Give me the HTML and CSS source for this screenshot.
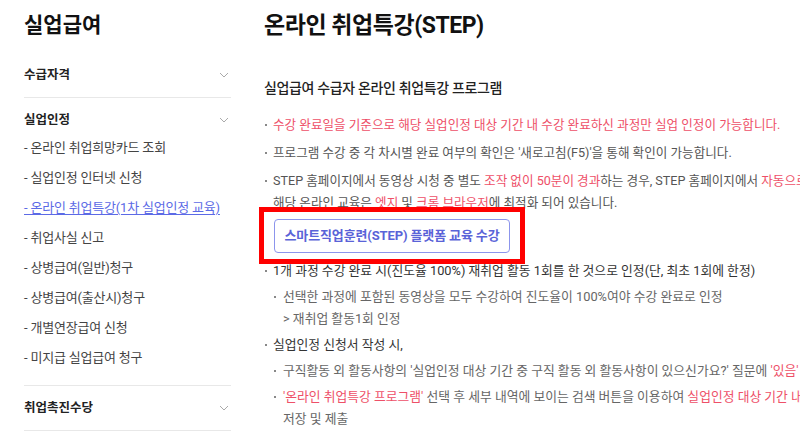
FILE: index.html
```html
<!DOCTYPE html>
<html lang="ko">
<head>
<meta charset="utf-8">
<title>온라인 취업특강(STEP)</title>
<link rel="stylesheet" href="styles.css">
</head>
<body>
<div class="page">
  <aside class="side">
    <h2 class="side-title">실업급여</h2>
    <div class="sec">
      <div class="sec-head"><span>수급자격</span><svg class="chev" width="10" height="6" viewBox="0 0 10 6"><polyline points="1,1 5,5 9,1" fill="none" stroke="#aaa" stroke-width="1"/></svg></div>
    </div>
    <div class="sec">
      <div class="sec-head"><span>실업인정</span><svg class="chev" width="10" height="6" viewBox="0 0 10 6"><polyline points="1,1 5,5 9,1" fill="none" stroke="#aaa" stroke-width="1"/></svg></div>
      <ul class="sub">
        <li>- 온라인 취업희망카드 조회</li>
        <li>- 실업인정 인터넷 신청</li>
        <li class="on"><span>- 온라인 취업특강(1차 실업인정 교육)</span></li>
        <li>- 취업사실 신고</li>
        <li>- 상병급여(일반)청구</li>
        <li>- 상병급여(출산시)청구</li>
        <li>- 개별연장급여 신청</li>
        <li>- 미지급 실업급여 청구</li>
      </ul>
    </div>
    <div class="sec">
      <div class="sec-head"><span>취업촉진수당</span><svg class="chev" width="10" height="6" viewBox="0 0 10 6"><polyline points="1,1 5,5 9,1" fill="none" stroke="#aaa" stroke-width="1"/></svg></div>
    </div>
  </aside>
  <main class="main">
    <h1 class="title">온라인 취업특강(STEP)</h1>
    <h3 class="heading">실업급여 수급자 온라인 취업특강 프로그램</h3>
    <ul class="list list-top">
      <li class="red">수강 완료일을 기준으로 해당 실업인정 대상 기간 내 수강 완료하신 과정만 실업 인정이 가능합니다.</li>
      <li>프로그램 수강 중 각 차시별 완료 여부의 확인은 '새로고침(F5)'을 통해 확인이 가능합니다.</li>
      <li>STEP 홈페이지에서 동영상 시청 중 별도 <span class="red">조작 없이 50분이 경과</span>하는 경우, STEP 홈페이지에서 <span class="red">자동으로</span><br>해당 온라인 교육은 <span class="red ul">엣지</span> 및 <span class="red ul">크롬 브라우저</span>에 최적화 되어 있습니다.</li>
    </ul>
    <div class="btn-wrap">
      <a class="btn" href="#">스마트직업훈련(STEP) 플랫폼 교육 수강</a>
    </div>
    <ul class="list list-bottom">
      <li>1개 과정 수강 완료 시(진도율 100%) 재취업 활동 1회를 한 것으로 인정(단, 최초 1회에 한정)
        <ul class="list sublist">
          <li>선택한 과정에 포함된 동영상을 모두 수강하여 진도율이 100%여야 수강 완료로 인정<br>&gt; 재취업 활동1회 인정</li>
        </ul>
      </li>
      <li>실업인정 신청서 작성 시,
        <ul class="list sublist">
          <li>구직활동 외 활동사항의 '실업인정 대상 기간 중 구직 활동 외 활동사항이 있으신가요?' 질문에 <span class="red">'있음'</span> 선택</li>
          <li><span class="red">'온라인 취업특강 프로그램'</span> 선택 후 세부 내역에 보이는 검색 버튼을 이용하여 <span class="red">실업인정 대상 기간 내</span><br>저장 및 제출</li>
        </ul>
      </li>
    </ul>
  </main>
</div>
</body>
</html>
```
FILE: styles.css
```css
html, body {
  margin: 0;
  padding: 0;
  overflow: hidden;
  background: #fff;
}
body {
  font-family: Roboto, "Noto Sans CJK KR", sans-serif;
  color: #444;
}
ul { list-style: none; margin: 0; padding: 0; }
h1, h2, h3 { margin: 0; }

.page {
  display: flex;
  gap: 33px;
  padding: 10px 0 0 24px;
  width: 1100px;
}

/* sidebar */
.side { width: 207px; flex: none; }
.side-title {
  font-size: 21px;
  line-height: 30px;
  font-weight: 700;
  color: #111;
  margin-bottom: 13px;
}
.sec {
  padding: 12px 0;
  border-bottom: 1px solid #e8e8e8;
}
.sec-head {
  display: flex;
  justify-content: space-between;
  align-items: center;
  font-size: 12.5px;
  line-height: 20px;
  font-weight: 700;
  color: #222;
}
.chev { margin-right: 2px; }
.sub { padding-top: 3px; }
.sub li {
  font-size: 13px;
  line-height: 30px;
  color: #444;
  letter-spacing: -0.015em;
}
.sub li.on span {
  color: #5c6ae6;
  text-decoration: underline;
  text-underline-offset: 2px;
}

/* main */
.main { flex: 1; min-width: 0; }
.title {
  font-size: 23px;
  line-height: 32px;
  font-weight: 700;
  color: #111;
  letter-spacing: -0.02em;
}
.heading {
  margin-top: 36px;
  font-size: 14px;
  line-height: 20px;
  font-weight: 500;
  color: #222;
  letter-spacing: -0.025em;
}
.list > li {
  position: relative;
  padding-left: 9px;
  font-size: 12.6px;
  line-height: 22px;
  white-space: nowrap;
}
.list-bottom > li,
.sublist > li { font-size: 12.8px; }
.list > li::before {
  content: "";
  position: absolute;
  left: 1px;
  top: 10px;
  width: 2px;
  height: 2px;
  background: #888;
}
.list-top { margin-top: 16px; }
.list-top > li { color: #555; }
.list-top > li + li { margin-top: 6px; }
.list-bottom { margin-top: 7px; }
.list-bottom > li { color: #333; }
.list-bottom > li + li { margin-top: 4px; }
.sublist { margin-top: 4px; }
.sublist > li { padding-left: 10px; color: #666; }
.sublist > li + li { margin-top: 4px; }
.red { color: #ee5068; }
.list-top > li.red { color: #ee5068; }
.ul { text-decoration: underline; text-underline-offset: 2px; }

.btn-wrap {
  position: relative;
  display: inline-block;
  margin: 5px 0 0 10px;
}
.btn-wrap::after {
  content: "";
  position: absolute;
  top: -12px;
  bottom: -11px;
  left: -15px;
  right: -15px;
  border: 5px solid #ff0000;
  pointer-events: none;
}
.btn {
  display: block;
  box-sizing: border-box;
  width: 236px;
  height: 34px;
  line-height: 32px;
  text-align: center;
  border: 1px solid #8c95ec;
  border-radius: 4px;
  font-size: 13px;
  font-weight: 700;
  color: #5a63d8;
  text-decoration: none;
  background: #fff;
  letter-spacing: -0.01em;
}
```
